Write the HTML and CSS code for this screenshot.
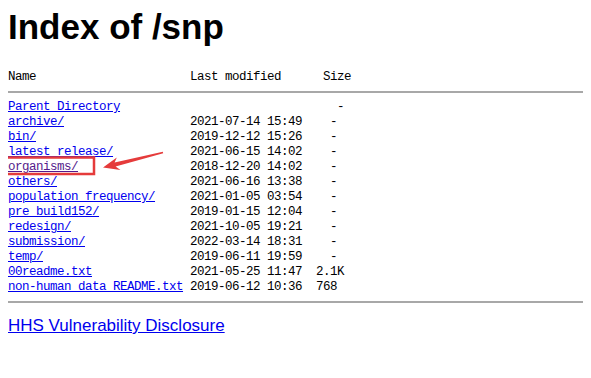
FILE: index.html
```html
<!DOCTYPE html>
<html>
<head>
<meta http-equiv="Content-Type" content="text/html; charset=utf-8"/>
<title>Index of /snp</title>
<link rel="stylesheet" href="styles.css">
</head>
<body>
<div class="page">
<h1>Index of /snp</h1>
<pre class="head"><a class="plain" href="?C=N;O=D">Name</a>                      <a class="plain" href="?C=M;O=A">Last modified</a>      <a class="plain" href="?C=S;O=A">Size</a></pre>
<hr/>
<pre class="rows"><a href="/">Parent Directory</a>                               -
<a href="archive/">archive/</a>                  2021-07-14 15:49    -
<a href="bin/">bin/</a>                      2019-12-12 15:26    -
<a href="latest_release/">latest_release/</a>           2021-06-15 14:02    -
<a class="visited" href="organisms/">organisms/</a>                2018-12-20 14:02    -
<a href="others/">others/</a>                   2021-06-16 13:38    -
<a href="population_frequency/">population_frequency/</a>     2021-01-05 03:54    -
<a href="pre_build152/">pre_build152/</a>             2019-01-15 12:04    -
<a href="redesign/">redesign/</a>                 2021-10-05 19:21    -
<a href="submission/">submission/</a>               2022-03-14 18:31    -
<a href="temp/">temp/</a>                     2019-06-11 19:59    -
<a href="00readme.txt">00readme.txt</a>              2021-05-25 11:47  2.1K
<a href="non-human_data_README.txt">non-human_data_README.txt</a> 2019-06-12 10:36  768</pre>
<hr/>
<p class="footer"><a href="https://www.hhs.gov/vulnerability-disclosure-policy/index.html">HHS Vulnerability Disclosure</a></p>

<!-- red markup drawn on top of the screenshot -->
<svg class="markup" width="591" height="378" viewBox="0 0 591 378">
  <rect x="4" y="157.5" width="90" height="16.5" fill="none" stroke="#e53b3b" stroke-width="2.5"/>
  <polygon fill="#e53b3b" points="103,167.5 120.5,170 115.6,166.4 163.2,153.2 162.8,151.8 114.6,162.6 116.8,157.4"/>
</svg>
</div>
</body>
</html>
```

FILE: styles.css
```css
body {
  margin: 8px;
  background-color: white;
  color: black;
  font-family: "Liberation Sans", Arial, sans-serif;
}

.page {
  position: relative;
}

h1 {
  font-size: 35px;
  line-height: 38px;
  font-weight: bold;
  margin: 0;
}

pre {
  font-family: "Liberation Mono", "Courier New", monospace;
  font-size: 12.5px;
  letter-spacing: -0.5px;
  line-height: 15px;
  margin: 0;
}

pre.head {
  margin-top: 24px;
}

a {
  color: #0000ee;
}

a.plain {
  color: black;
  text-decoration: none;
}

a.visited {
  color: #551a8b;
}

hr {
  height: 0;
  border: none;
  border-top: 2px solid #a8a8a8;
  margin: 6px -7px 7px 0;
}

pre.rows + hr {
  margin: 6px -7px 0 0;
}

.footer {
  font-size: 17px;
  line-height: 20px;
  margin: 13px 0 0;
}

.markup {
  position: absolute;
  left: -8px;
  top: -8px;
  pointer-events: none;
}
```
